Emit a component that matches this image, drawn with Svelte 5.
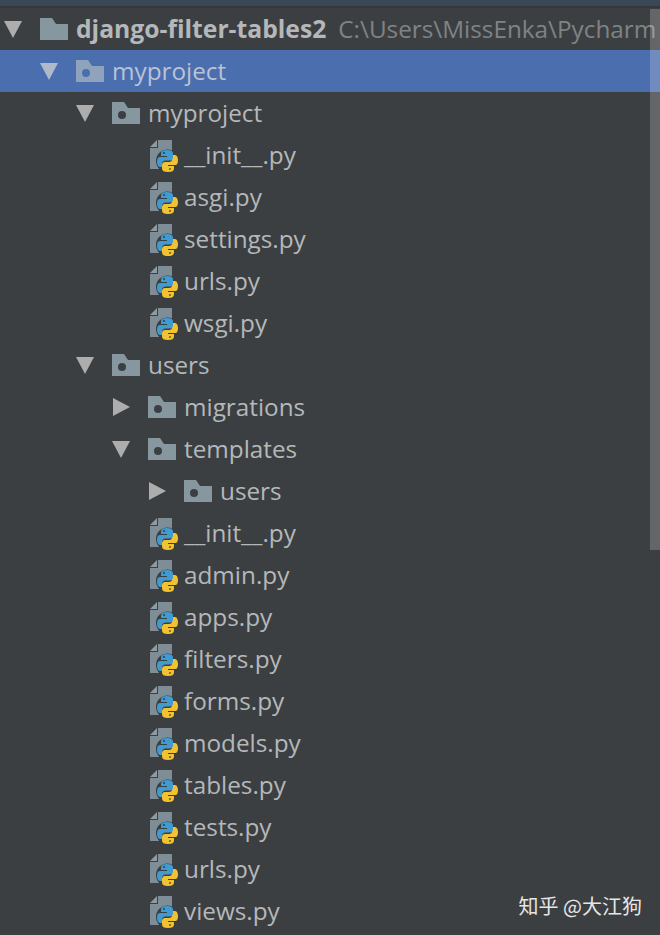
<script>
  const rows = [
    { name: 'django-filter-tables2', level: 0, type: 'root', open: true, path: 'C:\\Users\\MissEnka\\Pycharm' },
    { name: 'myproject', level: 1, type: 'dir', open: true, selected: true },
    { name: 'myproject', level: 2, type: 'dir', open: true },
    { name: '__init__.py', level: 3, type: 'py' },
    { name: 'asgi.py', level: 3, type: 'py' },
    { name: 'settings.py', level: 3, type: 'py' },
    { name: 'urls.py', level: 3, type: 'py' },
    { name: 'wsgi.py', level: 3, type: 'py' },
    { name: 'users', level: 2, type: 'dir', open: true },
    { name: 'migrations', level: 3, type: 'dir', open: false },
    { name: 'templates', level: 3, type: 'dir', open: true },
    { name: 'users', level: 4, type: 'dir', open: false },
    { name: '__init__.py', level: 3, type: 'py' },
    { name: 'admin.py', level: 3, type: 'py' },
    { name: 'apps.py', level: 3, type: 'py' },
    { name: 'filters.py', level: 3, type: 'py' },
    { name: 'forms.py', level: 3, type: 'py' },
    { name: 'models.py', level: 3, type: 'py' },
    { name: 'tables.py', level: 3, type: 'py' },
    { name: 'tests.py', level: 3, type: 'py' },
    { name: 'urls.py', level: 3, type: 'py' },
    { name: 'views.py', level: 3, type: 'py' }
  ];
</script>

<div class="panel">
  <div class="topline"></div>
  {#each rows as row}
    <div class="row" class:selected={row.selected} class:root={row.type === 'root'} style="--level: {row.level}">
      {#if row.type === 'py'}
        <svg class="py" width="28" height="32" viewBox="0 0 28 32">
          <path d="M8 0h14v29H0V8h8z" fill="#7f8e96" />
          <path d="M0 7l7-7v7z" fill="#8f9ba1" />
          <circle cx="17.500" cy="21" r="11.500" fill="#3c3f41" />
          <g transform="translate(7 10)">
            <path d="M11 22c4 0 6-1 6-3.500V16h-6v-1h7.500c1.500 0 2.500-2 2.500-4.500S20 5 18 5h-3v4c0 2-1 3-3 3H8c-2 0-3 1.500-3 3v3.500c0 2.500 2 3.500 6 3.500z" fill="#f2c230" />
            <path d="M10 0c-4 0-6 1-6 3.500V6h6v1H3C1 7 0 9 0 11.500S1 17 3 17h2v-3c0-2 1.500-3.500 3.500-3.500h4c2 0 3.500-1.300 3.500-3V3.500C16 1 14 0 10 0z" fill="#3f9bd0" />
          </g>
          <circle cx="14" cy="13" r="1" fill="#23465c" />
          <circle cx="20" cy="29" r="1" fill="#6b5a1e" />
        </svg>
      {:else}
        <svg class="arrow" width="18" height="18" viewBox="0 0 18 18">
          {#if row.open}
            <path d="M0 1h18L9 18z" fill="currentColor" />
          {:else}
            <path d="M1 0l17 9L1 18z" fill="currentColor" />
          {/if}
        </svg>
        <svg class="folder" width="28" height="22" viewBox="0 0 28 22">
          <path d="M0 22V0h12l4 6h12v16z" fill="currentColor" />
          {#if row.type === 'dir'}
            <circle class="dot" cx="10" cy="13" r="4" />
          {/if}
        </svg>
      {/if}
      <span class="name">{row.name}</span>
      {#if row.path}
        <span class="path">{row.path}</span>
      {/if}
    </div>
  {/each}
  <div class="scrollbar"></div>
  <div class="mark">知乎 @大江狗</div>
</div>

<style>
  :global(body) {
    margin: 0;
    background: #3c3f41;
  }

  .panel {
    position: relative;
    width: 660px;
    height: 935px;
    overflow: hidden;
    background: #3c3f41;
    font-family: 'Open Sans', 'Noto Sans', sans-serif;
    color: #b4b8ba;
  }

  .topline {
    height: 8px;
    background: #3a4856;
    border-bottom: 2px solid #33393d;
    box-sizing: border-box;
  }

  .row {
    display: flex;
    align-items: center;
    height: 42px;
    padding-left: calc(var(--level) * 36px + 4px);
    font-size: 24.300px;
    white-space: nowrap;
    color: #b4b8ba;
  }
  .row.selected {
    background: #4b6eaf;
    color: #b9c3d6;
  }
  .row.root .name {
    font-weight: 700;
    font-size: 24.700px;
  }
  .name,
  .path {
    margin-bottom: 2px;
  }

  .arrow {
    flex-shrink: 0;
    color: #adadad;
    margin-right: 18px;
  }
  .selected .arrow {
    color: #b0b9c9;
  }

  .folder {
    flex-shrink: 0;
    color: #87979f;
    margin-right: 8px;
  }
  .selected .folder {
    color: #8fa3bd;
  }
  .dot {
    fill: #3c3f41;
  }
  .selected .dot {
    fill: #4b6eaf;
  }

  .py {
    flex-shrink: 0;
    margin: 2px 6px 0 38px;
  }

  .path {
    margin-left: 12px;
    color: #7f8385;
  }

  .scrollbar {
    position: absolute;
    top: 9px;
    right: 0;
    width: 10px;
    height: 541px;
    background: rgba(255, 255, 255, 0.2);
  }

  .mark {
    position: absolute;
    right: 18px;
    top: 893px;
    font-family: 'Noto Sans CJK SC', sans-serif;
    font-size: 20px;
    line-height: 26px;
    color: #e6e6e6;
  }
</style>
